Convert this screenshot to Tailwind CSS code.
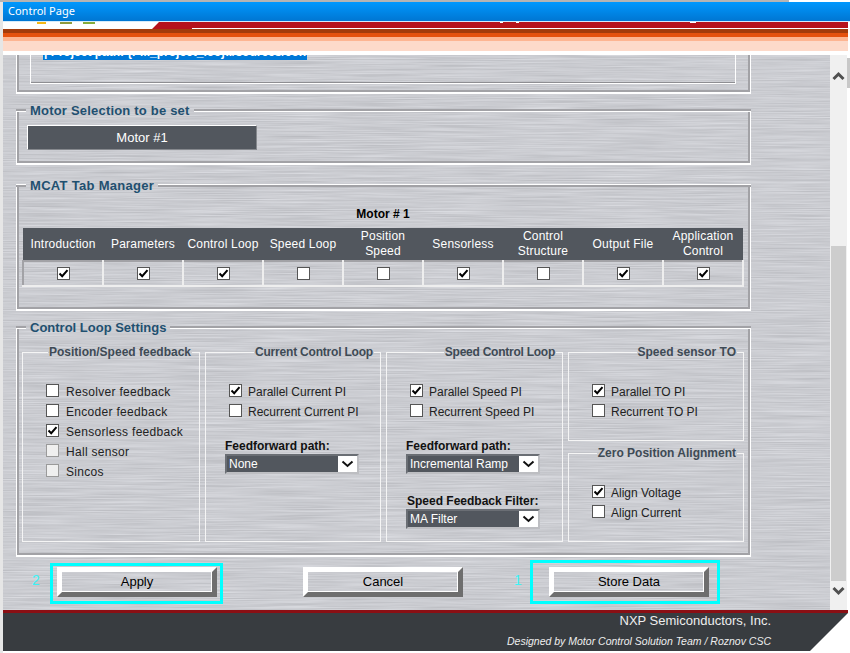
<!DOCTYPE html>
<html lang="en">
<head>
<meta charset="UTF-8" />
<title>Control Page</title>
<script src="https://cdn.jsdelivr.net/npm/@tailwindcss/browser@4"></script>
</head>
<body class="bg-white">
<div class="w-[850px] h-[653px] overflow-hidden flex flex-col font-['Liberation_Sans',Arial,sans-serif]">
    <!-- window edge -->
    <div class="h-[2px] w-[789px] bg-[#b4b4b4] shrink-0"></div>

    <div class="flex flex-1 min-h-0">
        <div class="w-[3px] bg-[#e6e6e6] shrink-0"></div>
        <div class="w-[847px] flex flex-col">
            <div class="h-[19px] shrink-0 flex items-center pl-[5px] bg-gradient-to-b from-[#0098fe] to-[#0076d2] text-white text-[11px] font-['Noto_Sans',sans-serif]">Control Page</div>
            <div class="h-px bg-[#d5ecfb] shrink-0"></div>

            <!-- page header -->
            <div class="h-[7px] mr-[2px] shrink-0 flex bg-white">
                <div class="w-[149px] flex items-start">
                    <span class="ml-[34px] w-[9px] h-[2px] bg-[#f5b814]"></span>
                    <span class="ml-[14px] w-[12px] h-[2px] bg-[#8f9a3c]"></span>
                    <span class="ml-[11px] w-[12px] h-[2px] bg-[#86ac3a]"></span>
                </div>
                <div class="flex-1 h-[7px] bg-[#b5121b] [clip-path:polygon(7px_0,100%_0,100%_6px,40px_6px,40px_100%,0_100%)] flex items-start">
                    <span class="ml-[348px] w-[3px] h-px bg-white"></span>
                    <span class="ml-[13px] w-[3px] h-px bg-white"></span>
                    <span class="ml-[171px] w-[6px] h-px bg-white"></span>
                </div>
            </div>
            <div class="h-[4px] mr-[2px] shrink-0 bg-[#a33c0c]"></div>
            <div class="h-[4px] mr-[2px] shrink-0 bg-[#e5520f]"></div>
            <div class="h-[4px] mr-[2px] shrink-0 bg-[#fdb592]"></div>
            <div class="h-[10px] mr-[2px] shrink-0 bg-[#fddaca]"></div>
            <div class="h-[4px] shrink-0 bg-white"></div>

            <!-- scrolling page -->
            <div class="h-[555px] shrink-0 flex">
                <div class="relative w-[827px] overflow-hidden bg-[#c8c9ce]">
                    <svg class="absolute inset-0 w-full h-full" xmlns="http://www.w3.org/2000/svg">
                        <filter id="brushed" x="0" y="0" width="100%" height="100%" color-interpolation-filters="sRGB">
                            <feTurbulence type="fractalNoise" baseFrequency="0.012 0.9" numOctaves="3" seed="4" />
                            <feColorMatrix type="matrix" values="0.16 0 0 0 0.715  0.16 0 0 0 0.72  0.16 0 0 0 0.74  0 0 0 0 1" />
                        </filter>
                        <rect width="100%" height="100%" filter="url(#brushed)" />
                    </svg>

                    <div class="relative">
                        <!-- previous group, scrolled off -->
                        <div class="ml-[13px] w-[735px] border-x border-b-2 border-white">
                            <div class="h-[37px] border-x-2 border-b-2 border-[#a2a2a6] pl-[11px] pr-[12px]">
                                <div class="h-[29px] border-x border-b border-white shadow-[inset_0_-1px_0_#8e8e92] pl-[12px]">
                                    <div class="w-[264px] h-[5px] overflow-hidden bg-[#0078d7] text-white text-[12px] font-bold leading-[14px] whitespace-nowrap pl-[1px]"><div class="-mt-[10px]">| Project path: {PM_project_loc}../sources/config</div></div>
                                </div>
                            </div>
                        </div>

                        <!-- Motor Selection -->
                        <section class="ml-[13px] w-[735px] mt-[8px]">
                            <div class="flex items-center h-4">
                                <span class="w-[10px] h-[3px] border-t-2 border-t-[#a2a2a6] border-b border-b-white"></span>
                                <h2 class="px-[4px] pt-[2px] text-[13px] font-bold text-[#1f5070] tracking-[0.2px]">Motor Selection to be set</h2>
                                <span class="flex-1 h-[3px] border-t-2 border-t-[#a2a2a6] border-b border-b-white"></span>
                            </div>
                            <div class="-mt-[8px] border-x border-b-2 border-white">
                                <div class="border-x-2 border-b-2 border-[#a2a2a6] pt-[15px] pb-[11px] pl-2">
                                    <div class="w-[230px] h-[25px] flex items-center justify-center bg-[#52575e] text-white text-[13px] border-t border-l border-t-white border-l-white border-b border-r border-b-[#85888d] border-r-[#85888d]">Motor #1</div>
                                </div>
                            </div>
                        </section>

                        <!-- MCAT Tab Manager -->
                        <section class="ml-[13px] w-[735px] mt-[12px]">
                            <div class="flex items-center h-4">
                                <span class="w-[10px] h-[3px] border-t border-t-white border-b-2 border-b-[#a2a2a6]"></span>
                                <h2 class="px-[4px] pt-[2px] text-[13px] font-bold text-[#1f5070] tracking-[0.3px]">MCAT Tab Manager</h2>
                                <span class="flex-1 h-[3px] border-t border-t-white border-b-2 border-b-[#a2a2a6]"></span>
                            </div>
                            <div class="-mt-[8px] border-x border-b-2 border-white">
                                <div class="border-x-2 border-b-2 border-[#a2a2a6] pt-[22px] pb-[20px] pl-1">
                                    <div class="w-[720px] h-[14px] mb-[7px] leading-[14px] text-center text-[12px] font-bold text-black">Motor # 1</div>
                                    <table class="-ml-px w-[722px] table-fixed border-collapse text-[12px] tracking-[0.2px] text-white">
                                        <tr class="h-[33px] bg-[#52575e] leading-[15px] text-center">
                                            <th class="font-normal">Introduction</th>
                                            <th class="font-normal">Parameters</th>
                                            <th class="font-normal">Control Loop</th>
                                            <th class="font-normal">Speed Loop</th>
                                            <th class="font-normal">Position<br />Speed</th>
                                            <th class="font-normal">Sensorless</th>
                                            <th class="font-normal">Control<br />Structure</th>
                                            <th class="font-normal">Output File</th>
                                            <th class="font-normal">Application<br />Control</th>
                                        </tr>
                                        <tr class="h-[25px]">
                                            <td class="border-2 border-t-[#a2a2a6] border-l-[#a2a2a6] border-b-[#eeeeee] border-r-[#eeeeee]"><span class="mx-auto w-[13px] h-[13px] flex items-center justify-center bg-white border border-[#555555]"><svg class="w-[11px] h-[11px]" viewBox="0 0 11 11"><path d="M1.5 5.5 L4.2 8.2 L9.5 2.2" fill="none" stroke="#000" stroke-width="2" /></svg></span></td>
                                            <td class="border-2 border-t-[#a2a2a6] border-l-[#a2a2a6] border-b-[#eeeeee] border-r-[#eeeeee]"><span class="mx-auto w-[13px] h-[13px] flex items-center justify-center bg-white border border-[#555555]"><svg class="w-[11px] h-[11px]" viewBox="0 0 11 11"><path d="M1.5 5.5 L4.2 8.2 L9.5 2.2" fill="none" stroke="#000" stroke-width="2" /></svg></span></td>
                                            <td class="border-2 border-t-[#a2a2a6] border-l-[#a2a2a6] border-b-[#eeeeee] border-r-[#eeeeee]"><span class="mx-auto w-[13px] h-[13px] flex items-center justify-center bg-white border border-[#555555]"><svg class="w-[11px] h-[11px]" viewBox="0 0 11 11"><path d="M1.5 5.5 L4.2 8.2 L9.5 2.2" fill="none" stroke="#000" stroke-width="2" /></svg></span></td>
                                            <td class="border-2 border-t-[#a2a2a6] border-l-[#a2a2a6] border-b-[#eeeeee] border-r-[#eeeeee]"><span class="mx-auto w-[13px] h-[13px] block bg-white border border-[#555555]"></span></td>
                                            <td class="border-2 border-t-[#a2a2a6] border-l-[#a2a2a6] border-b-[#eeeeee] border-r-[#eeeeee]"><span class="mx-auto w-[13px] h-[13px] block bg-white border border-[#555555]"></span></td>
                                            <td class="border-2 border-t-[#a2a2a6] border-l-[#a2a2a6] border-b-[#eeeeee] border-r-[#eeeeee]"><span class="mx-auto w-[13px] h-[13px] flex items-center justify-center bg-white border border-[#555555]"><svg class="w-[11px] h-[11px]" viewBox="0 0 11 11"><path d="M1.5 5.5 L4.2 8.2 L9.5 2.2" fill="none" stroke="#000" stroke-width="2" /></svg></span></td>
                                            <td class="border-2 border-t-[#a2a2a6] border-l-[#a2a2a6] border-b-[#eeeeee] border-r-[#eeeeee]"><span class="mx-auto w-[13px] h-[13px] block bg-white border border-[#555555]"></span></td>
                                            <td class="border-2 border-t-[#a2a2a6] border-l-[#a2a2a6] border-b-[#eeeeee] border-r-[#eeeeee]"><span class="mx-auto w-[13px] h-[13px] flex items-center justify-center bg-white border border-[#555555]"><svg class="w-[11px] h-[11px]" viewBox="0 0 11 11"><path d="M1.5 5.5 L4.2 8.2 L9.5 2.2" fill="none" stroke="#000" stroke-width="2" /></svg></span></td>
                                            <td class="border-2 border-t-[#a2a2a6] border-l-[#a2a2a6] border-b-[#eeeeee] border-r-[#eeeeee]"><span class="mx-auto w-[13px] h-[13px] flex items-center justify-center bg-white border border-[#555555]"><svg class="w-[11px] h-[11px]" viewBox="0 0 11 11"><path d="M1.5 5.5 L4.2 8.2 L9.5 2.2" fill="none" stroke="#000" stroke-width="2" /></svg></span></td>
                                        </tr>
                                    </table>
                                </div>
                            </div>
                        </section>

                        <!-- Control Loop Settings -->
                        <section class="ml-[13px] w-[735px] mt-[8px]">
                            <div class="flex items-center h-4">
                                <span class="w-[10px] h-[3px] border-t-2 border-t-[#a2a2a6] border-b border-b-white"></span>
                                <h2 class="px-[4px] pt-[2px] text-[13px] font-bold text-[#1f5070]">Control Loop Settings</h2>
                                <span class="flex-1 h-[3px] border-t-2 border-t-[#a2a2a6] border-b border-b-white"></span>
                            </div>
                            <div class="-mt-[8px] border-x border-b-2 border-white">
                                <div class="border-x-2 border-b-2 border-[#a2a2a6] pt-[18px] pb-[11px] pl-[3px] flex gap-[5px] text-[12px] text-[#222222]">

                                    <fieldset class="w-[178px] h-[197px] border border-[#f5f5f5] pl-[23px]">
                                        <legend class="ml-auto mr-[7px] px-px h-[14px] leading-[14px] font-bold text-[#3e4a55]">Position/Speed feedback</legend>
                                        <div class="mt-[23px] tracking-[0.3px]">
                                            <label class="h-5 flex items-center gap-[7px]"><span class="-mt-[3px] w-[13px] h-[13px] bg-white border border-[#555555]"></span>Resolver feedback</label>
                                            <label class="h-5 flex items-center gap-[7px]"><span class="-mt-[3px] w-[13px] h-[13px] bg-white border border-[#555555]"></span>Encoder feedback</label>
                                            <label class="h-5 flex items-center gap-[7px]"><span class="-mt-[3px] w-[13px] h-[13px] flex items-center justify-center bg-white border border-[#555555]"><svg class="w-[11px] h-[11px]" viewBox="0 0 11 11"><path d="M1.5 5.5 L4.2 8.2 L9.5 2.2" fill="none" stroke="#000" stroke-width="2" /></svg></span>Sensorless feedback</label>
                                            <label class="h-5 flex items-center gap-[7px]"><span class="-mt-[3px] w-[13px] h-[13px] bg-[#efefef] border border-[#9a9a9a]"></span>Hall sensor</label>
                                            <label class="h-5 flex items-center gap-[7px]"><span class="-mt-[3px] w-[13px] h-[13px] bg-[#efefef] border border-[#9a9a9a]"></span>Sincos</label>
                                        </div>
                                    </fieldset>

                                    <fieldset class="w-[176px] h-[197px] border border-[#f5f5f5] pl-[23px]">
                                        <legend class="ml-auto mr-[6px] px-px h-[14px] leading-[14px] font-bold text-[#3e4a55] tracking-[-0.2px]">Current Control Loop</legend>
                                        <div class="mt-[23px]">
                                            <label class="h-5 flex items-center gap-[6px]"><span class="-mt-[3px] w-[13px] h-[13px] flex items-center justify-center bg-white border border-[#555555]"><svg class="w-[11px] h-[11px]" viewBox="0 0 11 11"><path d="M1.5 5.5 L4.2 8.2 L9.5 2.2" fill="none" stroke="#000" stroke-width="2" /></svg></span>Parallel Current PI</label>
                                            <label class="h-5 flex items-center gap-[6px]"><span class="-mt-[3px] w-[13px] h-[13px] bg-white border border-[#555555]"></span>Recurrent Current PI</label>
                                        </div>
                                        <div class="-ml-[4px] mt-[17px] h-[15px] leading-[14px] font-bold text-[#111111]">Feedforward path:</div>
                                        <div class="-ml-[4px] w-[134px] h-[20px] flex items-center justify-between bg-[#52575e] border-2 border-t-[#6a6e74] border-l-[#6a6e74] border-b-[#bdbec2] border-r-[#bdbec2] text-white pl-[2px]">None<span class="w-[19px] h-[16px] flex items-center justify-center bg-white"><svg class="w-[13px] h-[8px]" viewBox="0 0 13 8"><path d="M1.5 1.5 L6.5 6 L11.5 1.5" fill="none" stroke="#111" stroke-width="2" /></svg></span></div>
                                    </fieldset>

                                    <fieldset class="w-[177px] h-[197px] border border-[#f5f5f5] pl-[23px]">
                                        <legend class="ml-auto mr-[6px] px-px h-[14px] leading-[14px] font-bold text-[#3e4a55] tracking-[-0.25px]">Speed Control Loop</legend>
                                        <div class="mt-[23px]">
                                            <label class="h-5 flex items-center gap-[6px]"><span class="-mt-[3px] w-[13px] h-[13px] flex items-center justify-center bg-white border border-[#555555]"><svg class="w-[11px] h-[11px]" viewBox="0 0 11 11"><path d="M1.5 5.5 L4.2 8.2 L9.5 2.2" fill="none" stroke="#000" stroke-width="2" /></svg></span>Parallel Speed PI</label>
                                            <label class="h-5 flex items-center gap-[6px]"><span class="-mt-[3px] w-[13px] h-[13px] bg-white border border-[#555555]"></span>Recurrent Speed PI</label>
                                        </div>
                                        <div class="-ml-[4px] mt-[17px] h-[15px] leading-[14px] font-bold text-[#111111]">Feedforward path:</div>
                                        <div class="-ml-[4px] w-[134px] h-[20px] flex items-center justify-between bg-[#52575e] border-2 border-t-[#6a6e74] border-l-[#6a6e74] border-b-[#bdbec2] border-r-[#bdbec2] text-white pl-[2px]">Incremental Ramp<span class="w-[19px] h-[16px] flex items-center justify-center bg-white"><svg class="w-[13px] h-[8px]" viewBox="0 0 13 8"><path d="M1.5 1.5 L6.5 6 L11.5 1.5" fill="none" stroke="#111" stroke-width="2" /></svg></span></div>
                                        <div class="-ml-[3px] mt-[20px] h-[15px] leading-[14px] font-bold text-[#111111]">Speed Feedback Filter:</div>
                                        <div class="-ml-[4px] w-[134px] h-[20px] flex items-center justify-between bg-[#52575e] border-2 border-t-[#6a6e74] border-l-[#6a6e74] border-b-[#bdbec2] border-r-[#bdbec2] text-white pl-[2px]">MA Filter<span class="w-[19px] h-[16px] flex items-center justify-center bg-white"><svg class="w-[13px] h-[8px]" viewBox="0 0 13 8"><path d="M1.5 1.5 L6.5 6 L11.5 1.5" fill="none" stroke="#111" stroke-width="2" /></svg></span></div>
                                    </fieldset>

                                    <div class="w-[176px] h-[197px] flex flex-col gap-[5px]">
                                        <fieldset class="h-[96px] border border-[#f5f5f5] pl-[23px]">
                                            <legend class="ml-auto mr-[6px] px-px h-[14px] leading-[14px] font-bold text-[#3e4a55]">Speed sensor TO</legend>
                                            <div class="mt-[23px]">
                                                <label class="h-5 flex items-center gap-[6px]"><span class="-mt-[3px] w-[13px] h-[13px] flex items-center justify-center bg-white border border-[#555555]"><svg class="w-[11px] h-[11px]" viewBox="0 0 11 11"><path d="M1.5 5.5 L4.2 8.2 L9.5 2.2" fill="none" stroke="#000" stroke-width="2" /></svg></span>Parallel TO PI</label>
                                                <label class="h-5 flex items-center gap-[6px]"><span class="-mt-[3px] w-[13px] h-[13px] bg-white border border-[#555555]"></span>Recurrent TO PI</label>
                                            </div>
                                        </fieldset>
                                        <fieldset class="h-[96px] border border-[#f5f5f5] pl-[23px]">
                                            <legend class="ml-auto mr-[6px] px-px h-[14px] leading-[14px] font-bold text-[#3e4a55]">Zero Position Alignment</legend>
                                            <div class="mt-[23px]">
                                                <label class="h-5 flex items-center gap-[6px]"><span class="-mt-[3px] w-[13px] h-[13px] flex items-center justify-center bg-white border border-[#555555]"><svg class="w-[11px] h-[11px]" viewBox="0 0 11 11"><path d="M1.5 5.5 L4.2 8.2 L9.5 2.2" fill="none" stroke="#000" stroke-width="2" /></svg></span>Align Voltage</label>
                                                <label class="h-5 flex items-center gap-[6px]"><span class="-mt-[3px] w-[13px] h-[13px] bg-white border border-[#555555]"></span>Align Current</label>
                                            </div>
                                        </fieldset>
                                    </div>
                                </div>
                            </div>
                        </section>

                        <!-- Buttons -->
                        <div class="flex items-start h-[54px] text-[13px] text-black">
                            <span class="ml-[29px] w-[18px] mt-[13px] text-[14px] text-[#3cf2f5]">2</span>
                            <div class="w-[173px] h-[41px] mt-[6px] border-[3px] border-[#00ffff] pl-[4px] pt-px">
                                <button class="w-[160px] h-[30px] border-[5px] border-t-white border-l-white border-b-[#6e6e6e] border-r-[#6e6e6e] shadow-[inset_-1px_-1px_0_#fff]">Apply</button>
                            </div>
                            <button class="ml-[80px] mt-[10px] w-[160px] h-[30px] border-[5px] border-t-white border-l-white border-b-[#6e6e6e] border-r-[#6e6e6e] shadow-[inset_-1px_-1px_0_#fff]">Cancel</button>
                            <span class="ml-[51px] w-[16px] mt-[13px] text-[14px] text-[#3cf2f5]">1</span>
                            <div class="w-[190px] h-[44px] mt-[3px] border-[3px] border-[#00ffff] pl-[16px] pt-[4px]">
                                <button class="w-[160px] h-[30px] border-[5px] border-t-white border-l-white border-b-[#6e6e6e] border-r-[#6e6e6e] shadow-[inset_-1px_-1px_0_#fff]">Store Data</button>
                            </div>
                        </div>
                    </div>
                </div>

                <!-- scrollbar -->
                <div class="w-[17px] bg-[#f0f0f0] flex flex-col items-center">
                    <svg class="w-[13px] h-[10px] mt-[16px]" viewBox="0 0 13 10"><path d="M1.5 8 L6.5 3 L11.5 8" fill="none" stroke="#505050" stroke-width="3" /></svg>
                    <div class="w-[15px] h-[335px] mt-[165px] bg-[#cdcdcd]"></div>
                    <svg class="w-[13px] h-[10px] mt-[5px]" viewBox="0 0 13 10"><path d="M1.5 2 L6.5 7 L11.5 2" fill="none" stroke="#505050" stroke-width="3" /></svg>
                </div>
                <div class="w-[3px]"><div class="mt-[3px] h-[30px] bg-[#c8c8c8]"></div></div>
            </div>

            <!-- footer -->
            <div class="h-[3px] mr-[2px] shrink-0 bg-[#8a0f14]"></div>
            <div class="h-[38px] w-[845px] shrink-0 bg-[#383c40] [clip-path:polygon(0_0,100%_0,807px_100%,0_100%)] pr-[77px] text-right text-[#eeeeee]">
                <div class="text-[13px] leading-[16px]">NXP Semiconductors, Inc.</div>
                <div class="text-[10.5px] leading-[12px] mt-[6px] italic">Designed by Motor Control Solution Team / Roznov CSC</div>
            </div>
        </div>
    </div>
</div>
</body>
</html>
